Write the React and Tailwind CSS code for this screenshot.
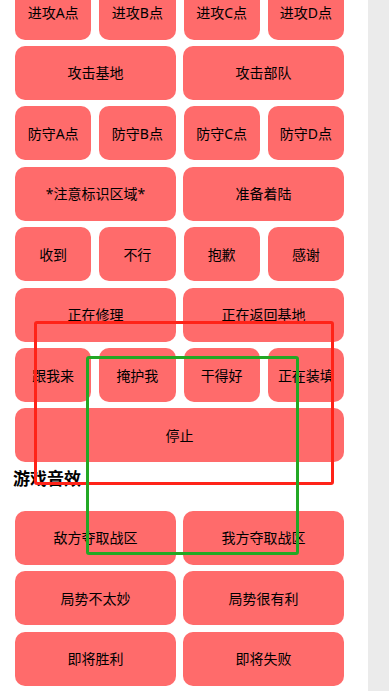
import React from "react";

const Btn = ({ children }) => (
  <div className="h-[54px] rounded-[10px] bg-[#ff6b6b] flex items-center justify-center text-[14px] text-black">
    {children}
  </div>
);

const Row4 = ({ items }) => (
  <div className="grid grid-cols-4 gap-x-[8px]">
    {items.map((t) => (
      <Btn key={t}>{t}</Btn>
    ))}
  </div>
);

const Row2 = ({ items }) => (
  <div className="grid grid-cols-2 gap-x-[7px]">
    {items.map((t) => (
      <Btn key={t}>{t}</Btn>
    ))}
  </div>
);

export default function App() {
  return (
    <div
      className="relative flex w-[389px] h-[691px] overflow-hidden bg-white"
      style={{ fontFamily: '"Noto Sans", "Noto Sans CJK SC", sans-serif' }}
    >
      <div className="w-[368px] shrink-0 pl-[15px] pr-[24px]">
        <div className="mt-[-14.5px] flex flex-col gap-y-[6.43px]">
          <Row4 items={["进攻A点", "进攻B点", "进攻C点", "进攻D点"]} />
          <Row2 items={["攻击基地", "攻击部队"]} />
          <Row4 items={["防守A点", "防守B点", "防守C点", "防守D点"]} />
          <Row2 items={["*注意标识区域*", "准备着陆"]} />
          <Row4 items={["收到", "不行", "抱歉", "感谢"]} />
          <Row2 items={["正在修理", "正在返回基地"]} />
          <Row4 items={["跟我来", "掩护我", "干得好", "正在装填"]} />
          <div className="grid grid-cols-1">
            <Btn>停止</Btn>
          </div>
        </div>
        <div
          className="ml-[-2px] mt-[3.5px] mb-[21px] h-[24px] leading-[24px] text-[17px] font-bold text-black"
          style={{ fontFamily: '"Noto Sans CJK SC", sans-serif' }}
        >
          游戏音效
        </div>
        <div className="flex flex-col gap-y-[6.3px]">
          <Row2 items={["敌方夺取战区", "我方夺取战区"]} />
          <Row2 items={["局势不太妙", "局势很有利"]} />
          <Row2 items={["即将胜利", "即将失败"]} />
        </div>
      </div>
      <div className="w-[21px] shrink-0 bg-[#ebebeb]" />

      <div className="pointer-events-none absolute left-[34px] top-[321px] w-[300px] h-[164px] border-[3px] border-[#ff2318] rounded-[3px]" />
      <div className="pointer-events-none absolute left-[86px] top-[356px] w-[213px] h-[199px] border-[3px] border-[#22a824] rounded-[3px]" />
    </div>
  );
}
